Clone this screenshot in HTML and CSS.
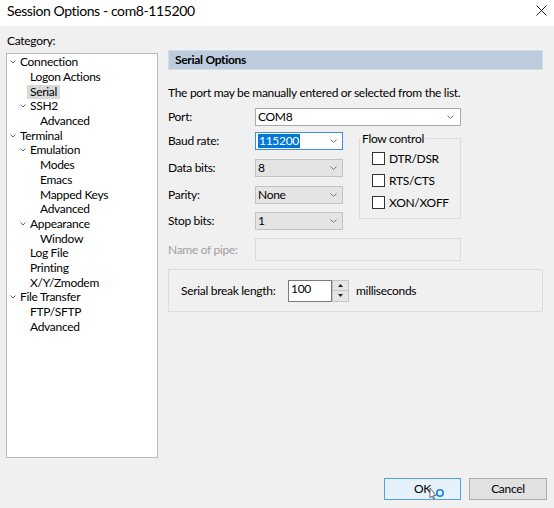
FILE: index.html
```html
<!DOCTYPE html>
<html>
<head>
<meta charset="utf-8">
<link rel="stylesheet" href="styles.css">
</head>
<body>
<div class="window">
  <div class="titlebar">
    <span class="title">Session Options - com8-115200</span>
    <svg class="close" width="11" height="11" viewBox="0 0 11 11"><path d="M0.5 0.5 L10.5 10.5 M10.5 0.5 L0.5 10.5" stroke="#222" stroke-width="1" fill="none"/></svg>
  </div>
  <div class="main">
    <div class="left">
      <div class="cat-label">Category:</div>
      <div class="tree">
        <div class="item l0"><span class="caret"><svg width="6" height="4" viewBox="0 0 6 4"><path d="M0.5 0.5 L3 3 L5.5 0.5" stroke="#666" fill="none"/></svg></span><span class="label">Connection</span></div>
        <div class="item l1"><span class="caret"></span><span class="label">Logon Actions</span></div>
        <div class="item l1"><span class="caret"></span><span class="label selected">Serial</span></div>
        <div class="item l1"><span class="caret"><svg width="6" height="4" viewBox="0 0 6 4"><path d="M0.5 0.5 L3 3 L5.5 0.5" stroke="#666" fill="none"/></svg></span><span class="label">SSH2</span></div>
        <div class="item l2"><span class="caret"></span><span class="label">Advanced</span></div>
        <div class="item l0"><span class="caret"><svg width="6" height="4" viewBox="0 0 6 4"><path d="M0.5 0.5 L3 3 L5.5 0.5" stroke="#666" fill="none"/></svg></span><span class="label">Terminal</span></div>
        <div class="item l1"><span class="caret"><svg width="6" height="4" viewBox="0 0 6 4"><path d="M0.5 0.5 L3 3 L5.5 0.5" stroke="#666" fill="none"/></svg></span><span class="label">Emulation</span></div>
        <div class="item l2"><span class="caret"></span><span class="label">Modes</span></div>
        <div class="item l2"><span class="caret"></span><span class="label">Emacs</span></div>
        <div class="item l2"><span class="caret"></span><span class="label">Mapped Keys</span></div>
        <div class="item l2"><span class="caret"></span><span class="label">Advanced</span></div>
        <div class="item l1"><span class="caret"><svg width="6" height="4" viewBox="0 0 6 4"><path d="M0.5 0.5 L3 3 L5.5 0.5" stroke="#666" fill="none"/></svg></span><span class="label">Appearance</span></div>
        <div class="item l2"><span class="caret"></span><span class="label">Window</span></div>
        <div class="item l1"><span class="caret"></span><span class="label">Log File</span></div>
        <div class="item l1"><span class="caret"></span><span class="label">Printing</span></div>
        <div class="item l1"><span class="caret"></span><span class="label">X/Y/Zmodem</span></div>
        <div class="item l0"><span class="caret"><svg width="6" height="4" viewBox="0 0 6 4"><path d="M0.5 0.5 L3 3 L5.5 0.5" stroke="#666" fill="none"/></svg></span><span class="label">File Transfer</span></div>
        <div class="item l1"><span class="caret"></span><span class="label">FTP/SFTP</span></div>
        <div class="item l1"><span class="caret"></span><span class="label">Advanced</span></div>
      </div>
    </div>
    <div class="right">
      <div class="header">Serial Options</div>
      <p class="desc">The port may be manually entered or selected from the list.</p>
      <div class="form">
        <div class="flabel r1">Port:</div>
        <div class="combo white wide r1"><span class="val">COM8</span><svg class="chev" width="7" height="4" viewBox="0 0 7 4"><path d="M0.5 0.5 L3.5 3.5 L6.5 0.5" stroke="#777" fill="none"/></svg></div>

        <div class="flabel r2">Baud rate:</div>
        <div class="combo white focus r2"><span class="val sel">115200</span><svg class="chev" width="7" height="4" viewBox="0 0 7 4"><path d="M0.5 0.5 L3.5 3.5 L6.5 0.5" stroke="#777" fill="none"/></svg></div>

        <fieldset class="flow">
          <legend>Flow control</legend>
          <div class="chk"><span class="box"></span>DTR/DSR</div>
          <div class="chk"><span class="box"></span>RTS/CTS</div>
          <div class="chk"><span class="box"></span>XON/XOFF</div>
        </fieldset>

        <div class="flabel r3">Data bits:</div>
        <div class="combo grey r3"><span class="val">8</span><svg class="chev" width="7" height="4" viewBox="0 0 7 4"><path d="M0.5 0.5 L3.5 3.5 L6.5 0.5" stroke="#777" fill="none"/></svg></div>

        <div class="flabel r4">Parity:</div>
        <div class="combo grey r4"><span class="val">None</span><svg class="chev" width="7" height="4" viewBox="0 0 7 4"><path d="M0.5 0.5 L3.5 3.5 L6.5 0.5" stroke="#777" fill="none"/></svg></div>

        <div class="flabel r5">Stop bits:</div>
        <div class="combo grey r5"><span class="val">1</span><svg class="chev" width="7" height="4" viewBox="0 0 7 4"><path d="M0.5 0.5 L3.5 3.5 L6.5 0.5" stroke="#777" fill="none"/></svg></div>

        <div class="flabel r6 disabled">Name of pipe:</div>
        <div class="pipe r6"></div>
      </div>
      <div class="break-group">
        <span class="break-label">Serial break length:</span>
        <span class="num">100</span>
        <span class="spin">
          <span class="spin-btn up"><svg width="5" height="3" viewBox="0 0 5 3"><path d="M0 3 L2.5 0 L5 3 Z" fill="#222"/></svg></span>
          <span class="spin-btn down"><svg width="5" height="3" viewBox="0 0 5 3"><path d="M0 0 L2.5 3 L5 0 Z" fill="#222"/></svg></span>
        </span>
        <span class="unit">milliseconds</span>
      </div>
    </div>
  </div>
  <div class="footer">
    <button class="btn ok">OK
      <svg class="cursor" width="16" height="14" viewBox="0 0 16 14"><path d="M1 1 L1 11 L3 9 L4.5 12 L5.5 11.5 L4.2 8.6 L7 8.6 Z" fill="#fff" stroke="#333" stroke-width="0.7"/><circle cx="11" cy="6" r="3.2" fill="none" stroke="#1a84e0" stroke-width="1.6"/></svg>
    </button>
    <button class="btn">Cancel</button>
  </div>
</div>
</body>
</html>
```
FILE: styles.css
```css
html, body {
  margin: 0;
  padding: 0;
}
body {
  font-family: Lato, "Noto Sans", sans-serif;
  font-size: 12px;
  letter-spacing: -0.3px;
  color: #000;
}
.window {
  width: 554px;
  height: 508px;
  background: #f0f0f0;
  display: flex;
  flex-direction: column;
  overflow: hidden;
}
.titlebar {
  flex: none;
  height: 26px;
  background: #fff;
  display: flex;
  align-items: flex-start;
  justify-content: space-between;
  padding: 0 7px 0 7px;
  box-sizing: border-box;
}
.title {
  font-size: 14px;
  letter-spacing: -0.4px;
  line-height: 20px;
  margin-top: 1px;
  color: #000;
  white-space: nowrap;
}
.close {
  margin-top: 5px;
}
.main {
  flex: none;
  display: flex;
  height: 432px;
  padding-left: 6px;
}
.left {
  width: 152px;
  display: flex;
  flex-direction: column;
}
.cat-label {
  margin: 7px 0 0 1px;
  line-height: 15px;
}
.tree {
  margin-top: 5px;
  height: 405px;
  box-sizing: border-box;
  border: 1px solid #b9b9b9;
  background: #fff;
  padding: 1px 0 0 3px;
}
.item {
  height: 14.7px;
  line-height: 14px;
  white-space: nowrap;
  display: flex;
  align-items: center;
}
.item.l1 { padding-left: 10px; }
.item.l2 { padding-left: 20px; }
.caret {
  width: 10px;
  flex: none;
  display: inline-flex;
  align-items: center;
}
.label {
  padding: 0 3px;
  margin-left: -3px;
  line-height: 14px;
}
.label.selected {
  background: #d9d9d9;
}
.right {
  margin-left: 10px;
  width: 375px;
}
.header {
  margin-top: 24px;
  height: 20px;
  box-sizing: border-box;
  background: #bdccdc;
  border: 1px solid #d3dde8;
  font-weight: bold;
  padding-left: 6px;
  line-height: 18px;
}
.desc {
  margin: 15px 0 0 0;
  line-height: 15px;
  white-space: nowrap;
}
.form {
  margin-top: 8px;
  display: grid;
  grid-template-columns: 87px 88px 16px 102px;
  grid-template-rows: 24px 27px 27px 26px 26px 24px;
}
.flabel {
  grid-column: 1;
  line-height: 18px;
  white-space: nowrap;
}
.flabel.disabled {
  color: #a0a0a0;
  line-height: 23px;
}
.r1 { grid-row: 1; }
.r2 { grid-row: 2; }
.r3 { grid-row: 3; }
.r4 { grid-row: 4; }
.r5 { grid-row: 5; }
.r6 { grid-row: 6; }
.combo {
  grid-column: 2;
  height: 18px;
  box-sizing: border-box;
  border: 1px solid #adadad;
  display: flex;
  align-items: center;
  justify-content: space-between;
  padding: 0 5px 0 2px;
}
.combo.wide {
  grid-column: 2 / 5;
  padding-right: 6px;
}
.combo.white { background: #fff; border-color: #a9a9a9; }
.combo.focus { border-color: #3c8fdc; }
.combo.grey { background: #e4e4e4; border-color: #c2c2c2; }
.val {
  line-height: 14px;
}
.val.sel {
  background: #0078d7;
  color: #fff;
  padding: 0 1px;
}
.flow {
  grid-column: 4;
  grid-row: 2 / 6;
  align-self: start;
  margin: 0;
  height: 88px;
  box-sizing: border-box;
  border: 1px solid #dcdcdc;
  padding: 0 0 0 12px;
  margin-top: -1px;
}
.flow legend {
  padding: 0 1px;
  margin-left: -11px;
  line-height: 15px;
}
.chk {
  display: flex;
  align-items: center;
  height: 13px;
  line-height: 13px;
  margin-top: 9px;
  white-space: nowrap;
}
.chk:first-of-type {
  margin-top: 6px;
}
.box {
  width: 13px;
  height: 13px;
  box-sizing: border-box;
  border: 1px solid #333;
  background: #fff;
  margin-right: 4px;
  flex: none;
}
.pipe {
  grid-column: 2 / 5;
  height: 23px;
  box-sizing: border-box;
  border: 1px solid #dcdcdc;
}
.break-group {
  margin-top: 7px;
  height: 43px;
  box-sizing: border-box;
  border: 1px solid #dcdcdc;
  display: flex;
  align-items: center;
  padding-left: 12px;
}
.break-label {
  width: 107px;
  flex: none;
  white-space: nowrap;
}
.num {
  width: 44px;
  height: 22px;
  box-sizing: border-box;
  background: #fff;
  border: 1px solid #7a7a7a;
  padding: 0 0 0 2px;
  line-height: 16px;
}
.spin {
  width: 17px;
  height: 22px;
  display: flex;
  flex-direction: column;
  box-sizing: border-box;
}
.spin-btn {
  flex: 1;
  display: flex;
  align-items: center;
  justify-content: center;
  background: #e5e5e5;
  border: 1px solid #c5c5c5;
}
.spin-btn.down {
  border-top: none;
}
.unit {
  margin-left: 7px;
  white-space: nowrap;
}
.footer {
  flex: none;
  display: flex;
  justify-content: flex-end;
  gap: 8px;
  padding: 20px 7px 0 0;
}
.btn {
  position: relative;
  width: 78px;
  height: 22px;
  box-sizing: border-box;
  background: #e1e1e1;
  border: 1px solid #adadad;
  font-family: Lato, "Noto Sans", sans-serif;
  font-size: 12px;
  letter-spacing: -0.3px;
  color: #000;
  padding: 0;
  line-height: 18px;
}
.btn.ok {
  background: #e5f1fb;
  border-color: #5aa0e0;
  width: 77px;
}
.cursor {
  position: absolute;
  left: 44px;
  top: 8px;
}
```
